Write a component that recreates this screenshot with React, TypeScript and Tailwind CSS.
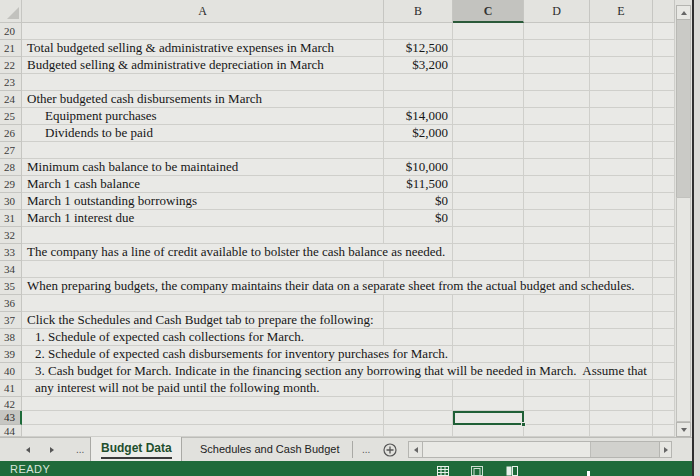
import React from "react";

type Cell = { span?: number; text?: string; right?: boolean; pad?: string };
type Row = { n: number; h: string; lh: string; cells: Cell[] };

const GRID = "grid grid-cols-[22px_362px_69px_71px_66px_63px_22px]";

const spanCls: Record<number, string> = {
  1: "",
  2: "col-span-2",
  5: "col-span-5",
};

const R = "h-[17px]";
const L = "leading-[17px]";

const rows: Row[] = [
  { n: 20, h: R, lh: L, cells: [] },
  {
    n: 21,
    h: R,
    lh: L,
    cells: [
      { text: "Total budgeted selling & administrative expenses in March" },
      { text: "$12,500", right: true },
    ],
  },
  {
    n: 22,
    h: R,
    lh: L,
    cells: [
      { text: "Budgeted selling & administrative depreciation in March" },
      { text: "$3,200", right: true },
    ],
  },
  { n: 23, h: R, lh: L, cells: [] },
  { n: 24, h: R, lh: L, cells: [{ text: "Other budgeted cash disbursements in March" }] },
  {
    n: 25,
    h: R,
    lh: L,
    cells: [
      { text: "Equipment purchases", pad: "pl-[23px]" },
      { text: "$14,000", right: true },
    ],
  },
  {
    n: 26,
    h: R,
    lh: L,
    cells: [
      { text: "Dividends to be paid", pad: "pl-[23px]" },
      { text: "$2,000", right: true },
    ],
  },
  { n: 27, h: R, lh: L, cells: [] },
  {
    n: 28,
    h: R,
    lh: L,
    cells: [{ text: "Minimum cash balance to be maintained" }, { text: "$10,000", right: true }],
  },
  {
    n: 29,
    h: R,
    lh: L,
    cells: [{ text: "March 1 cash balance" }, { text: "$11,500", right: true }],
  },
  {
    n: 30,
    h: R,
    lh: L,
    cells: [{ text: "March 1 outstanding borrowings" }, { text: "$0", right: true }],
  },
  {
    n: 31,
    h: R,
    lh: L,
    cells: [{ text: "March 1 interest due" }, { text: "$0", right: true }],
  },
  { n: 32, h: R, lh: L, cells: [] },
  {
    n: 33,
    h: R,
    lh: L,
    cells: [
      {
        span: 2,
        text: "The company has a line of credit available to bolster the cash balance as needed.",
      },
    ],
  },
  { n: 34, h: R, lh: L, cells: [] },
  {
    n: 35,
    h: R,
    lh: L,
    cells: [
      {
        span: 5,
        text: "When preparing budgets, the company maintains their data on a separate sheet from the actual budget and schedules.",
      },
    ],
  },
  { n: 36, h: R, lh: L, cells: [] },
  {
    n: 37,
    h: R,
    lh: L,
    cells: [{ text: "Click the Schedules and Cash Budget tab to prepare the following:" }],
  },
  {
    n: 38,
    h: R,
    lh: L,
    cells: [{ text: "1. Schedule of expected cash collections for March.", pad: "pl-[13px]" }],
  },
  {
    n: 39,
    h: R,
    lh: L,
    cells: [
      {
        span: 2,
        text: "2. Schedule of expected cash disbursements for inventory purchases for March.",
        pad: "pl-[13px]",
      },
    ],
  },
  {
    n: 40,
    h: R,
    lh: L,
    cells: [
      {
        span: 5,
        text: "3. Cash budget for March. Indicate in the financing section any borrowing that will be needed in March.\u00a0 Assume that",
        pad: "pl-[13px]",
      },
    ],
  },
  {
    n: 41,
    h: R,
    lh: L,
    cells: [
      { text: "any interest will not be paid until the following month.", pad: "pl-[13px]" },
    ],
  },
  { n: 42, h: "h-[14px]", lh: "leading-[14px]", cells: [] },
  { n: 43, h: "h-[14px]", lh: "leading-[13px]", cells: [] },
  { n: 44, h: "h-[12px]", lh: "leading-[12px]", cells: [] },
];

function SheetRow({ row }: { row: Row }) {
  const used = row.cells.reduce((s, c) => s + (c.span ?? 1), 0);
  const filler = Array.from({ length: 6 - used });
  const selectedRow = row.n === 43;
  return (
    <div className={`${GRID} ${row.h}`}>
      <div
        className={`${row.lh} ${
          selectedRow
            ? "bg-[#c6c6c2] border-b border-[#bdbdb9] border-r-2 border-r-[#1e6b3a] pl-[4px] text-[11px] text-[#2a2a2a] overflow-hidden"
            : "bg-[#e4e4e0] border-b border-r border-[#c6c6c2] pl-[4px] text-[11px] text-[#3a3a3a] overflow-hidden"
        }`}
      >
        {row.n}
      </div>
      {row.cells.map((c, i) => (
        <div
          key={i}
          className={`${spanCls[c.span ?? 1]} border-b border-r border-[#cfcfcb] text-[13px] leading-[16px] whitespace-nowrap overflow-hidden text-[#161616] ${
            c.right ? "text-right pr-[4px]" : c.pad ?? "pl-[5px]"
          }`}
        >
          {c.text}
        </div>
      ))}
      {filler.map((_, i) => {
        const colIndex = used + i; // 0 = A
        const isSel = selectedRow && colIndex === 2;
        return (
          <div
            key={`f${i}`}
            className={
              isSel
                ? "relative border-2 border-[#1f5f36]"
                : "border-b border-r border-[#cfcfcb]"
            }
          >
            {isSel && (
              <div className="absolute right-[-4px] bottom-[-4px] w-[5px] h-[5px] bg-[#1f5f36] border border-[#e8e8e5]" />
            )}
          </div>
        );
      })}
    </div>
  );
}

function HeaderRow() {
  const cols = ["A", "B", "C", "D", "E", ""];
  return (
    <div className={`${GRID} h-[23px] bg-[#e3e3df]`}>
      <div className="border-r border-b border-[#c6c6c2] flex items-end justify-end pr-[2px] pb-[3px]">
        <svg width="12" height="12" viewBox="0 0 12 12">
          <polygon points="12,0 12,12 0,12" fill="#c2c2be" />
        </svg>
      </div>
      {cols.map((c, i) =>
        c === "C" ? (
          <div
            key={i}
            className="bg-[#c3c3bf] border-b-2 border-[#2b5a3a] border-r border-r-[#c6c6c2] flex items-center justify-center text-[12px] font-bold text-[#333]"
          >
            {c}
          </div>
        ) : (
          <div
            key={i}
            className="border-b border-r border-[#c6c6c2] flex items-center justify-center text-[12px] text-[#2a2a2a]"
          >
            {c}
          </div>
        )
      )}
    </div>
  );
}

function VScroll() {
  return (
    <div className="w-[17px] h-full pt-[5px] flex flex-col bg-[#e2e2de]">
      <div className="h-[15px] mx-[1px] border border-[#b5b5b1] bg-[#e8e8e4] flex items-center justify-center">
        <svg width="6" height="4" viewBox="0 0 6 4">
          <polygon points="3,0 6,4 0,4" fill="#666" />
        </svg>
      </div>
      <div className="h-[177px] mx-[1px] bg-[#cacac6] border-x border-[#b9b9b5]" />
      <div className="flex-1 mx-[1px] bg-[#e6e6e2] border border-[#c2c2be]" />
      <div className="h-[15px] mx-[1px] border border-[#b5b5b1] bg-[#e8e8e4] flex items-center justify-center">
        <svg width="6" height="4" viewBox="0 0 6 4">
          <polygon points="0,0 6,0 3,4" fill="#666" />
        </svg>
      </div>
    </div>
  );
}

function TabBar() {
  return (
    <div className="h-[24px] flex items-stretch bg-[#e1e1dd] border-t border-[#bcbcb8] text-[#333]">
      <div className="w-[90px] flex items-center">
        <svg className="ml-[26px]" width="4" height="6" viewBox="0 0 4 6">
          <polygon points="4,0 4,6 0,3" fill="#555" />
        </svg>
        <svg className="ml-[20px]" width="4" height="6" viewBox="0 0 4 6">
          <polygon points="0,0 4,3 0,6" fill="#555" />
        </svg>
        <span className="ml-[22px] text-[10px] leading-none text-[#555]" style={{ fontFamily: "'Liberation Sans', sans-serif" }}>
          ...
        </span>
      </div>
      <div className="w-[92px] -mt-[1px] bg-[#ecece9] border-x border-[#a9a9a5] flex items-center pl-[10px]">
        <span className="text-[12px] font-bold text-[#1f4f2e] border-b-2 border-[#3a3a3a] leading-[16px] pb-[1px]" style={{ fontFamily: "'Liberation Sans', sans-serif" }}>
          Budget Data
        </span>
      </div>
      <div className="w-[170px] flex items-center pl-[18px] text-[11px] text-[#222]" style={{ fontFamily: "'Liberation Sans', sans-serif" }}>
        Schedules and Cash Budget
      </div>
      <div className="w-px my-[3px] bg-[#a9a9a5]" />
      <div className="w-[55px] flex items-center">
        <span className="ml-[9px] text-[10px] leading-none text-[#555]" style={{ fontFamily: "'Liberation Sans', sans-serif" }}>
          ...
        </span>
        <svg className="ml-[13px]" width="14" height="14" viewBox="0 0 14 14">
          <circle cx="7" cy="7" r="6" fill="none" stroke="#555" strokeWidth="1.2" />
          <path d="M7 3.5v7M3.5 7h7" stroke="#555" strokeWidth="1.3" />
        </svg>
      </div>
      <div className="w-[264px] my-[3px] flex border border-[#b5b5b1]">
        <div className="w-[14px] border-r border-[#b5b5b1] bg-[#e6e6e2] flex items-center justify-center">
          <svg width="4" height="6" viewBox="0 0 4 6">
            <polygon points="4,0 4,6 0,3" fill="#666" />
          </svg>
        </div>
        <div className="w-[168px] bg-[#e9e9e5] border-r border-[#bdbdb9]" />
        <div className="flex-1 bg-[#d1d1cd]" />
        <div className="w-[12px] border-l border-[#b5b5b1] bg-[#e6e6e2] flex items-center justify-center">
          <svg width="4" height="6" viewBox="0 0 4 6">
            <polygon points="0,0 4,3 0,6" fill="#666" />
          </svg>
        </div>
      </div>
      <div className="flex-1" />
    </div>
  );
}

function StatusBar() {
  return (
    <div className="h-[15px] bg-[#1f6a3a] flex items-start overflow-hidden">
      <div
        className="w-[437px] pl-[10px] pt-[2px] text-[11px] leading-[12px] text-[#d8e6dc] tracking-[0.5px]"
        style={{ fontFamily: "'Liberation Sans', sans-serif" }}
      >
        READY
      </div>
      <svg className="mt-[5px]" width="12" height="10" viewBox="0 0 12 10">
        <rect x="0.5" y="0.5" width="11" height="9" fill="none" stroke="#e8f0ea" />
        <path d="M4 0.5v9M8 0.5v9M0.5 3.5h11M0.5 6.5h11" stroke="#e8f0ea" />
      </svg>
      <svg className="mt-[5px] ml-[22px]" width="12" height="10" viewBox="0 0 12 10">
        <rect x="0.5" y="0.5" width="11" height="9" fill="none" stroke="#cfe0d4" />
        <rect x="3" y="2.5" width="6" height="7" fill="none" stroke="#cfe0d4" />
      </svg>
      <svg className="mt-[5px] ml-[23px]" width="12" height="10" viewBox="0 0 12 10">
        <rect x="0.5" y="0.5" width="5" height="9" fill="#e8f0ea" />
        <rect x="6.5" y="0.5" width="5" height="9" fill="none" stroke="#e8f0ea" />
      </svg>
      <div className="ml-[69px] mt-[10px] w-[3px] h-[5px] bg-white" />
    </div>
  );
}

export default function App() {
  return (
    <div
      className="w-[700px] h-[476px] overflow-hidden flex bg-[#e8e8e5]"
      style={{ fontFamily: "'Liberation Serif', 'Times New Roman', serif" }}
    >
      <div className="w-[692px] flex flex-col">
        <div className="h-[437px] flex">
          <div className="w-[675px] flex flex-col bg-[#e9e9e6]">
            <HeaderRow />
            {rows.map((r) => (
              <SheetRow key={r.n} row={r} />
            ))}
          </div>
          <VScroll />
        </div>
        <TabBar />
        <StatusBar />
      </div>
      <div className="w-[2px] bg-[#2e2e2e]" />
      <div className="w-[6px] bg-[#d9d9d5]" />
    </div>
  );
}
